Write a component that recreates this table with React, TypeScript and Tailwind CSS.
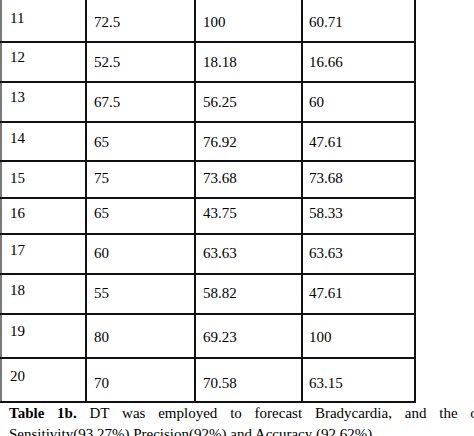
import React from "react";

type Row = { n: string; a: string; b: string; c: string; h: string; p1: string; p2: string };

const rows: Row[] = [
  { n: "11", a: "72.5", b: "100", c: "60.71", h: "h-[43px]", p1: "pt-[10.5px]", p2: "pt-[14.5px]" },
  { n: "12", a: "52.5", b: "18.18", c: "16.66", h: "h-[40px]", p1: "pt-[6.5px]", p2: "pt-[11.5px]" },
  { n: "13", a: "67.5", b: "56.25", c: "60", h: "h-[40px]", p1: "pt-[6.5px]", p2: "pt-[11.5px]" },
  { n: "14", a: "65", b: "76.92", c: "47.61", h: "h-[39px]", p1: "pt-[7.5px]", p2: "pt-[11.5px]" },
  { n: "15", a: "75", b: "73.68", c: "73.68", h: "h-[37px]", p1: "pt-[8.5px]", p2: "pt-[8.5px]" },
  { n: "16", a: "65", b: "43.75", c: "58.33", h: "h-[36px]", p1: "pt-[6.5px]", p2: "pt-[6.5px]" },
  { n: "17", a: "60", b: "63.63", c: "63.63", h: "h-[40px]", p1: "pt-[7.5px]", p2: "pt-[10.5px]" },
  { n: "18", a: "55", b: "58.82", c: "47.61", h: "h-[40px]", p1: "pt-[7.5px]", p2: "pt-[10.5px]" },
  { n: "19", a: "80", b: "69.23", c: "100", h: "h-[44px]", p1: "pt-[8.5px]", p2: "pt-[14.5px]" },
  { n: "20", a: "70", b: "70.58", c: "63.15", h: "h-[44px]", p1: "pt-[9.5px]", p2: "pt-[16.5px]" },
];

export default function App() {
  return (
    <div className="w-[474px] h-[436px] overflow-hidden bg-white text-black font-['Liberation_Serif',serif]">
      <div className="w-[416px] text-[15px] leading-[15px]">
        {rows.map((r) => (
          <div
            key={r.n}
            className={`grid grid-cols-[87px_109px_107px_113px] border-b-2 border-[#111] ${r.h}`}
          >
            <div className={`border-l-2 border-l-[#7a7a7a] border-r-2 border-r-[#111] pl-[8px] ${r.p1}`}>{r.n}</div>
            <div className={`border-r-2 border-r-[#111] pl-[7px] ${r.p2}`}>{r.a}</div>
            <div className={`border-r-2 border-r-[#111] pl-[7px] ${r.p2}`}>{r.b}</div>
            <div className={`border-r-2 border-r-[#111] pl-[6px] ${r.p2}`}>{r.c}</div>
          </div>
        ))}
      </div>
      <div className="pl-[9px] w-[540px] text-[15px] leading-[21px]">
        <div className="w-[513px] text-justify [text-align-last:justify]">
          <span className="font-bold">Table 1b.</span> DT was employed to forecast Bradycardia, and the obtained
        </div>
        <div>Sensitivity(93.27%),Precision(92%) and Accuracy (92.62%)</div>
      </div>
    </div>
  );
}
